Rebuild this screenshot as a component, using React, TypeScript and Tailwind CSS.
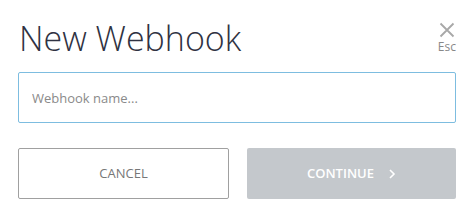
import { useState } from "react";

export default function App() {
    const [name, setName] = useState("");

    return (
        <div className="w-[474px] h-[220px] bg-white px-[18px] pt-[14px] font-['Open_Sans',sans-serif]">
            <div className="flex items-start justify-between">
                <h1 className="text-[34px] leading-[48px] font-light text-[#2f3242] pl-[1px]">New Webhook</h1>
                <button className="flex flex-col items-center pt-[8px] text-[#a8a8a8]">
                    <svg width="16" height="16" viewBox="0 0 16 16" fill="none" stroke="currentColor" strokeWidth="1.8">
                        <path d="M1.5 1.5L14.5 14.5M14.5 1.5L1.5 14.5" />
                    </svg>
                    <span className="text-[12px] leading-[14px] mt-[2px] text-[#888]">Esc</span>
                </button>
            </div>

            <input
                type="text"
                value={name}
                onChange={(e) => setName(e.target.value)}
                placeholder="Webhook name..."
                className="mt-[10px] w-full h-[51px] px-[13px] border border-[#7dbde0] rounded-[2px] text-[13px] text-[#333] placeholder:text-[#8a8a8a] focus:outline-none"
            />

            <div className="flex gap-[18px] mt-[25px]">
                <button className="flex-1 h-[51px] border border-[#a0a0a0] rounded-[2px] text-[13px] text-[#777]">
                    CANCEL
                </button>
                <button
                    disabled
                    className="flex-1 h-[51px] rounded-[2px] bg-[#c4c8cc] text-white text-[13px] font-semibold flex items-center justify-center gap-[14px]"
                >
                    CONTINUE
                    <svg width="8" height="12" viewBox="0 0 8 12" fill="none" stroke="currentColor" strokeWidth="1.6">
                        <path d="M2 2L6 6L2 10" />
                    </svg>
                </button>
            </div>
        </div>
    );
}
